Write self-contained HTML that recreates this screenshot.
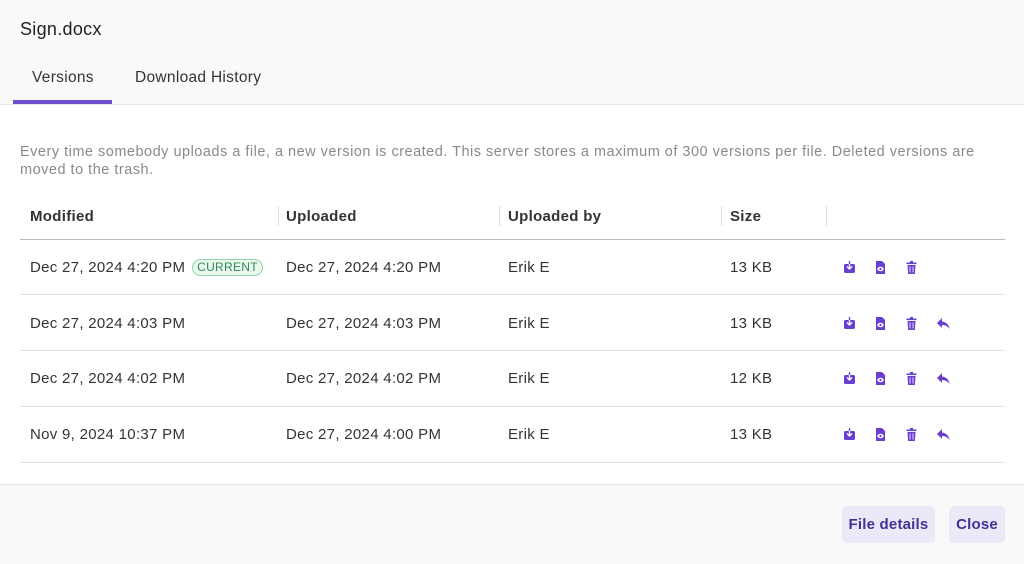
<!DOCTYPE html>
<html><head><style>
*{margin:0;padding:0;box-sizing:border-box}
body{width:1024px;height:564px;background:#fff;font-family:"Liberation Sans",sans-serif;color:#222;position:relative;overflow:hidden}
.hdr{position:absolute;left:0;top:0;width:1024px;height:105px;background:#f9f9f9;border-bottom:1px solid #e6e6e6}
.t{position:absolute;white-space:nowrap}
.ftr{position:absolute;left:0;top:484px;width:1024px;height:80px;background:#f9f9f9;border-top:1px solid #e6e6e6}
.btn{position:absolute;top:506px;height:37px;background:#ece8f7;border-radius:5px;color:#3f3394;font-weight:bold;font-size:15px;line-height:38px;text-align:center;letter-spacing:0.2px}
.line{position:absolute;left:20px;width:985px;height:1px;background:#e2e2e2}
.sep{position:absolute;top:206px;width:1px;height:20px;background:#ddd}
.cell{position:absolute;font-size:15px;letter-spacing:0.3px;color:#333;white-space:nowrap}
.ic{position:absolute;width:13px;height:13px}
</style></head><body>
<div class="hdr"></div>
<div class="t" style="left:20px;top:19px;font-size:18px;letter-spacing:0.3px;color:#222">Sign.docx</div>
<div class="t" style="left:32px;top:69px;font-size:15.5px;letter-spacing:0.3px;color:#333">Versions</div>
<div class="t" style="left:135px;top:69px;font-size:15.5px;letter-spacing:0.3px;color:#333">Download History</div>
<div style="position:absolute;left:13px;top:100px;width:99px;height:4px;background:#6a4fcf"></div>
<div class="t" style="left:20px;top:143px;font-size:14.5px;letter-spacing:0.5px;color:#8a8a8a;line-height:18px;white-space:normal;width:968px">Every time somebody uploads a file, a new version is created. This server stores a maximum of 300 versions per file. Deleted versions are moved to the trash.</div>
<div class="cell" style="left:30px;top:208px;font-weight:bold">Modified</div>
<div class="cell" style="left:286px;top:208px;font-weight:bold">Uploaded</div>
<div class="cell" style="left:508px;top:208px;font-weight:bold">Uploaded by</div>
<div class="cell" style="left:730px;top:208px;font-weight:bold">Size</div>
<div class="sep" style="left:278px"></div><div class="sep" style="left:499px"></div><div class="sep" style="left:721px"></div><div class="sep" style="left:826px"></div>
<div class="line" style="top:239px;background:#bbb"></div>
<div class="line" style="top:294px"></div><div class="line" style="top:350px"></div><div class="line" style="top:406px"></div><div class="line" style="top:462px"></div>

<div class="cell" style="left:30px;top:259px">Dec 27, 2024 4:20 PM</div>
<div class="t" style="left:192px;top:259px;height:17px;width:71px;text-align:center;border:1px solid #8fd3a6;background:#eaf8ee;border-radius:9px;color:#2f8a52;font-size:12px;line-height:15px;letter-spacing:0.3px">CURRENT</div>
<div class="cell" style="left:286px;top:259px">Dec 27, 2024 4:20 PM</div>
<div class="cell" style="left:508px;top:259px">Erik E</div>
<div class="cell" style="left:730px;top:259px">13 KB</div>

<div class="cell" style="left:30px;top:315px">Dec 27, 2024 4:03 PM</div>
<div class="cell" style="left:286px;top:315px">Dec 27, 2024 4:03 PM</div>
<div class="cell" style="left:508px;top:315px">Erik E</div>
<div class="cell" style="left:730px;top:315px">13 KB</div>

<div class="cell" style="left:30px;top:370px">Dec 27, 2024 4:02 PM</div>
<div class="cell" style="left:286px;top:370px">Dec 27, 2024 4:02 PM</div>
<div class="cell" style="left:508px;top:370px">Erik E</div>
<div class="cell" style="left:730px;top:370px">12 KB</div>

<div class="cell" style="left:30px;top:426px">Nov 9, 2024 10:37 PM</div>
<div class="cell" style="left:286px;top:426px">Dec 27, 2024 4:00 PM</div>
<div class="cell" style="left:508px;top:426px">Erik E</div>
<div class="cell" style="left:730px;top:426px">13 KB</div>

<svg width="0" height="0" style="position:absolute"><defs>
<g id="dl"><rect x="1" y="3" width="11" height="9" rx="1.5" fill="#6a3fd0"/><path d="M6.5 0V8M4 5.5l2.5 2.5 2.5-2.5" stroke="#fff" stroke-width="1.4" fill="none"/><path d="M6.5 0V3" stroke="#6a3fd0" stroke-width="1.4"/></g>
<g id="vw"><path d="M2 0h6l3 3v10H2z" fill="#6a3fd0"/><ellipse cx="6.5" cy="8" rx="3.2" ry="2.2" fill="#fff"/><circle cx="6.5" cy="8" r="1.1" fill="#6a3fd0"/></g>
<g id="tr"><rect x="1.5" y="1.5" width="10" height="1.6" fill="#6a3fd0"/><rect x="5" y="0" width="3" height="2" fill="#6a3fd0"/><path d="M2.5 4h8l-0.6 9h-6.8z" fill="#6a3fd0"/><path d="M5 5.5v6M8 5.5v6" stroke="#fff" stroke-width="0.8"/></g>
<g id="rv"><path d="M5 1L0 6l5 5V8c3 0 5.5 1 7.5 4-0.5-4-3-7-7.5-7.5z" fill="#6a3fd0"/></g>
</defs></svg>
<svg class="ic" style="left:843px;top:261px"><use href="#dl"/></svg>
<svg class="ic" style="left:874px;top:261px"><use href="#vw"/></svg>
<svg class="ic" style="left:905px;top:261px"><use href="#tr"/></svg>
<svg class="ic" style="left:843px;top:317px"><use href="#dl"/></svg>
<svg class="ic" style="left:874px;top:317px"><use href="#vw"/></svg>
<svg class="ic" style="left:905px;top:317px"><use href="#tr"/></svg>
<svg class="ic" style="left:937px;top:317px"><use href="#rv"/></svg>
<svg class="ic" style="left:843px;top:372px"><use href="#dl"/></svg>
<svg class="ic" style="left:874px;top:372px"><use href="#vw"/></svg>
<svg class="ic" style="left:905px;top:372px"><use href="#tr"/></svg>
<svg class="ic" style="left:937px;top:372px"><use href="#rv"/></svg>
<svg class="ic" style="left:843px;top:428px"><use href="#dl"/></svg>
<svg class="ic" style="left:874px;top:428px"><use href="#vw"/></svg>
<svg class="ic" style="left:905px;top:428px"><use href="#tr"/></svg>
<svg class="ic" style="left:937px;top:428px"><use href="#rv"/></svg>

<div class="ftr"></div>
<div class="btn" style="left:842px;width:93px">File details</div>
<div class="btn" style="left:949px;width:56px">Close</div>
</body></html>
